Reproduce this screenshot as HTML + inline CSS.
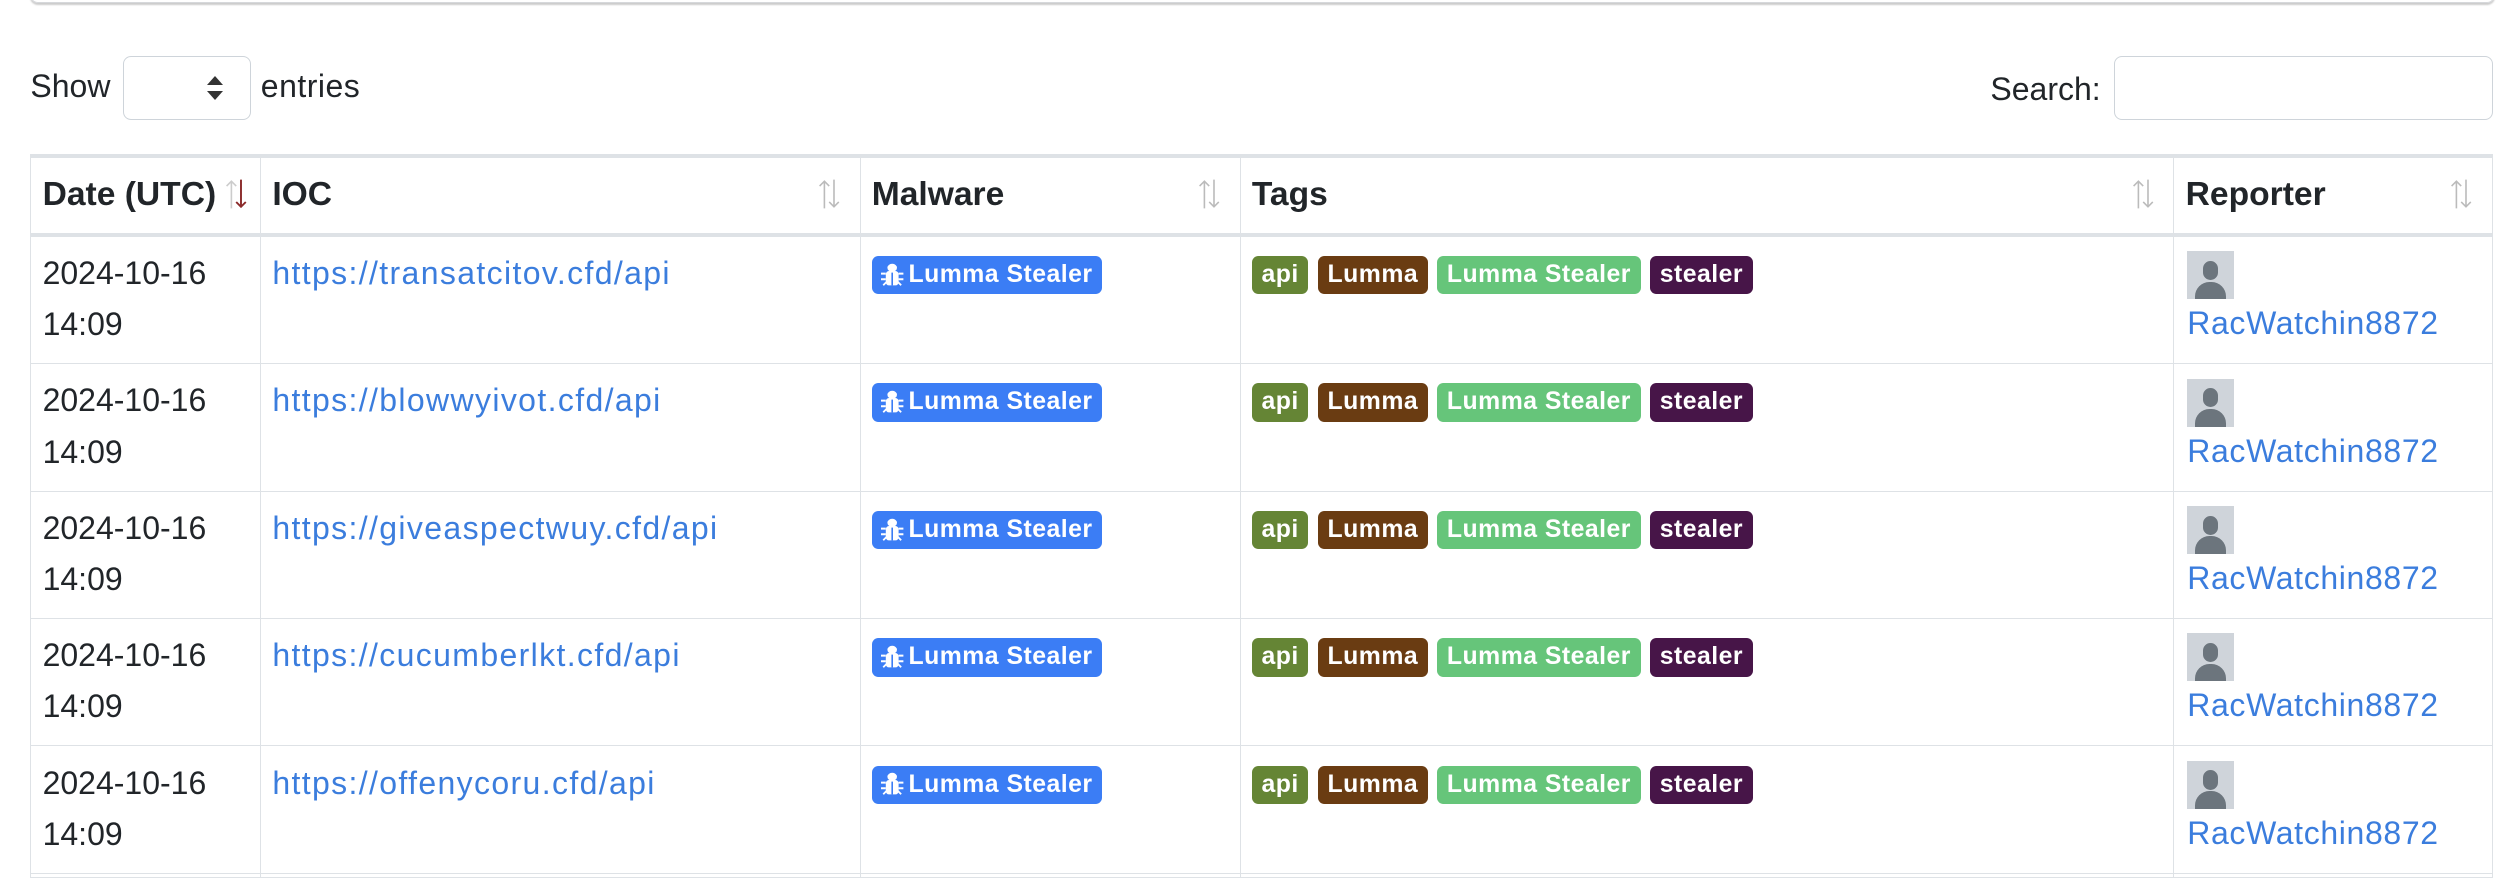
<!DOCTYPE html>
<html><head><meta charset="utf-8"><style>
html,body{margin:0;padding:0;background:#fff;width:2508px;height:883px;overflow:hidden;}
#w{zoom:1.6;width:1568px;height:552px;position:relative;overflow:hidden;font-family:"Liberation Sans",sans-serif;color:#212529;font-size:20px;}
.topbar{position:absolute;left:19px;top:-6px;width:1539px;height:7px;border:1px solid #d6d8db;border-top:none;border-radius:0 0 5px 5px;box-shadow:0 1px 1px #ccc;}
.show{position:absolute;left:19px;top:40px;line-height:28px;}
.sel{position:absolute;left:77px;top:35px;width:80px;height:40px;border:1px solid #ced4da;border-radius:5px;box-sizing:border-box;}
.sel:after{content:"";position:absolute;left:52px;top:12px;border:5px solid transparent;border-bottom:6px solid #333;border-top:none;}
.sel:before{content:"";position:absolute;left:52px;top:21px;border:5px solid transparent;border-top:6px solid #333;border-bottom:none;}
.ent{position:absolute;left:163px;top:40px;line-height:28px;letter-spacing:0.3px;}
.srch{position:absolute;left:1244px;top:42px;line-height:28px;}
.inp{position:absolute;left:1321px;top:35px;width:237px;height:40px;border:1px solid #ced4da;border-radius:5px;box-sizing:border-box;}
table{position:absolute;left:19px;top:96px;width:1539px;border-collapse:collapse;border-top:3px solid #dee2e6;}
td,th{border:1px solid #dee2e6;padding:7px 7px 8px;vertical-align:top;text-align:left;line-height:32px;}
th{font-weight:bold;font-size:21px;height:27px;position:relative;border-bottom:3px solid #dee2e6;padding-top:7px;}
th svg{position:absolute;right:12px;top:13px;}
tr.r td{height:64px;}
a{color:#3b7ddd;text-decoration:none;}
a.u{letter-spacing:0.85px;}
.b{display:inline-block;font-size:15.5px;font-weight:bold;color:#fff;line-height:24px;padding:0 6px;border-radius:4px;margin-right:6px;vertical-align:top;margin-top:5px;letter-spacing:0.3px;}
.b svg{vertical-align:-3px;margin-right:3px;}
.mb{background:#3b7df5;}
.t1{background:#658535}.t2{background:#6a3c12}.t3{background:#66c57a}.t4{background:#471548}
.av{display:block;width:29px;height:30px;background:#cfd4da;position:relative;overflow:hidden;margin-top:2px;margin-left:1px;}
.av:before{content:"";position:absolute;left:10px;top:6px;width:9px;height:12px;border-radius:5px;background:#6c757d;}
.av:after{content:"";position:absolute;left:5px;top:19px;width:19px;height:16px;border-radius:9px 9px 0 0;background:#6c757d;}
.rep{line-height:30px;display:block;letter-spacing:0.4px;margin-left:1px;}
</style></head><body><div id="w">
<div class="topbar"></div>
<div class="show">Show</div><div class="sel"></div><div class="ent">entries</div>
<div class="srch">Search:</div><div class="inp"></div>
<table>
<tr><th style="width:129px">Date (UTC)<svg style="right:8px" width="14" height="20" viewBox="0 0 14 20"><path d="M4 19V2M1 5l3-3 3 3" stroke="#ccc" fill="none" stroke-width="1"/><path d="M10 1v17M7 15l3 3 3-3" stroke="#8b2a2a" fill="none" stroke-width="1.2"/></svg></th><th style="width:360px">IOC<svg width="14" height="20" viewBox="0 0 14 20"><path d="M4 19V2M1 5l3-3 3 3M10 1v17M7 15l3 3 3-3" stroke="#bbb" fill="none"/></svg></th><th style="width:223px">Malware<svg width="14" height="20" viewBox="0 0 14 20"><path d="M4 19V2M1 5l3-3 3 3M10 1v17M7 15l3 3 3-3" stroke="#bbb" fill="none"/></svg></th><th style="width:569px">Tags<svg width="14" height="20" viewBox="0 0 14 20"><path d="M4 19V2M1 5l3-3 3 3M10 1v17M7 15l3 3 3-3" stroke="#bbb" fill="none"/></svg></th><th>Reporter<svg width="14" height="20" viewBox="0 0 14 20"><path d="M4 19V2M1 5l3-3 3 3M10 1v17M7 15l3 3 3-3" stroke="#bbb" fill="none"/></svg></th></tr>
<tr class="r"><td>2024-10-16<br>14:09</td><td><a class="u">https://transatcitov.cfd/api</a></td><td><span class="b mb"><svg width="14" height="15" viewBox="0 0 14 15"><g fill="#fff"><ellipse cx="7" cy="3" rx="3" ry="2.5"/><rect x="3" y="5" width="8" height="9" rx="2"/><path d="M0 6h3v1.3H0zM11 6h3v1.3h-3zM0 9.5h3v1.3H0zM11 9.5h3v1.3h-3zM1 13.5l2-2 .8.8-2 2zM13 13.5l-2-2-.8.8 2 2z"/></g><path d="M7 6v8" stroke="#3b7df5" stroke-width="1"/></svg>Lumma Stealer</span></td><td><span class="b t1">api</span><span class="b t2">Lumma</span><span class="b t3">Lumma Stealer</span><span class="b t4">stealer</span></td><td><span class="av"></span><a class="rep">RacWatchin8872</a></td></tr>
<tr class="r"><td>2024-10-16<br>14:09</td><td><a class="u">https://blowwyivot.cfd/api</a></td><td><span class="b mb"><svg width="14" height="15" viewBox="0 0 14 15"><g fill="#fff"><ellipse cx="7" cy="3" rx="3" ry="2.5"/><rect x="3" y="5" width="8" height="9" rx="2"/><path d="M0 6h3v1.3H0zM11 6h3v1.3h-3zM0 9.5h3v1.3H0zM11 9.5h3v1.3h-3zM1 13.5l2-2 .8.8-2 2zM13 13.5l-2-2-.8.8 2 2z"/></g><path d="M7 6v8" stroke="#3b7df5" stroke-width="1"/></svg>Lumma Stealer</span></td><td><span class="b t1">api</span><span class="b t2">Lumma</span><span class="b t3">Lumma Stealer</span><span class="b t4">stealer</span></td><td><span class="av"></span><a class="rep">RacWatchin8872</a></td></tr>
<tr class="r"><td>2024-10-16<br>14:09</td><td><a class="u">https://giveaspectwuy.cfd/api</a></td><td><span class="b mb"><svg width="14" height="15" viewBox="0 0 14 15"><g fill="#fff"><ellipse cx="7" cy="3" rx="3" ry="2.5"/><rect x="3" y="5" width="8" height="9" rx="2"/><path d="M0 6h3v1.3H0zM11 6h3v1.3h-3zM0 9.5h3v1.3H0zM11 9.5h3v1.3h-3zM1 13.5l2-2 .8.8-2 2zM13 13.5l-2-2-.8.8 2 2z"/></g><path d="M7 6v8" stroke="#3b7df5" stroke-width="1"/></svg>Lumma Stealer</span></td><td><span class="b t1">api</span><span class="b t2">Lumma</span><span class="b t3">Lumma Stealer</span><span class="b t4">stealer</span></td><td><span class="av"></span><a class="rep">RacWatchin8872</a></td></tr>
<tr class="r"><td>2024-10-16<br>14:09</td><td><a class="u">https://cucumberlkt.cfd/api</a></td><td><span class="b mb"><svg width="14" height="15" viewBox="0 0 14 15"><g fill="#fff"><ellipse cx="7" cy="3" rx="3" ry="2.5"/><rect x="3" y="5" width="8" height="9" rx="2"/><path d="M0 6h3v1.3H0zM11 6h3v1.3h-3zM0 9.5h3v1.3H0zM11 9.5h3v1.3h-3zM1 13.5l2-2 .8.8-2 2zM13 13.5l-2-2-.8.8 2 2z"/></g><path d="M7 6v8" stroke="#3b7df5" stroke-width="1"/></svg>Lumma Stealer</span></td><td><span class="b t1">api</span><span class="b t2">Lumma</span><span class="b t3">Lumma Stealer</span><span class="b t4">stealer</span></td><td><span class="av"></span><a class="rep">RacWatchin8872</a></td></tr>
<tr class="r"><td>2024-10-16<br>14:09</td><td><a class="u">https://offenycoru.cfd/api</a></td><td><span class="b mb"><svg width="14" height="15" viewBox="0 0 14 15"><g fill="#fff"><ellipse cx="7" cy="3" rx="3" ry="2.5"/><rect x="3" y="5" width="8" height="9" rx="2"/><path d="M0 6h3v1.3H0zM11 6h3v1.3h-3zM0 9.5h3v1.3H0zM11 9.5h3v1.3h-3zM1 13.5l2-2 .8.8-2 2zM13 13.5l-2-2-.8.8 2 2z"/></g><path d="M7 6v8" stroke="#3b7df5" stroke-width="1"/></svg>Lumma Stealer</span></td><td><span class="b t1">api</span><span class="b t2">Lumma</span><span class="b t3">Lumma Stealer</span><span class="b t4">stealer</span></td><td><span class="av"></span><a class="rep">RacWatchin8872</a></td></tr>
<tr><td style="height:2px;padding:0"></td><td style="padding:0"></td><td style="padding:0"></td><td style="padding:0"></td><td style="padding:0"></td></tr>
</table>
</div></body></html>
